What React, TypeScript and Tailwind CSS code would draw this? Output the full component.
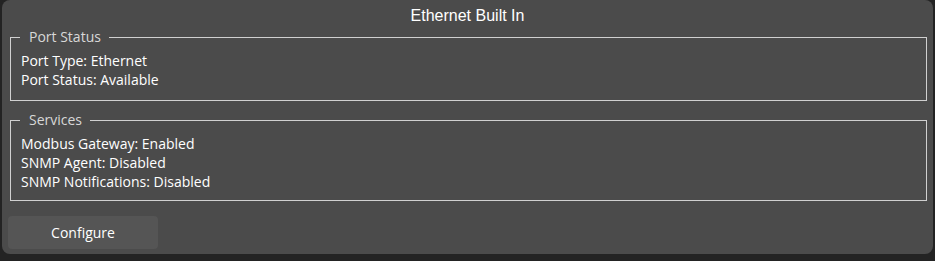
import React from "react";

const portLines = ["Port Type: Ethernet", "Port Status: Available"];
const serviceLines = [
  "Modbus Gateway: Enabled",
  "SNMP Agent: Disabled",
  "SNMP Notifications: Disabled",
];

function Group({ title, lines, bottom }: { title: string; lines: string[]; bottom: string }) {
  return (
    <fieldset className={`ml-2 mr-[6px] border border-[#d0d0d0] px-[10px] pt-[4px] ${bottom}`}>
      <legend className="-ml-[1px] pl-[9px] pr-[8px] text-[14px] leading-[20px] text-[#d8d8d8]">{title}</legend>
      {lines.map((line) => (
        <div key={line} className="text-[14px] leading-[19px] text-white">
          {line}
        </div>
      ))}
    </fieldset>
  );
}

export default function App() {
  return (
    <div className="h-[261px] w-[935px] bg-[#232323] pl-[2px] font-['Open_Sans',sans-serif]">
      <div className="flex h-[254px] w-[931px] flex-col rounded-lg bg-[#4b4b4b]">
        <div className="pt-[6px] text-center font-['Liberation_Sans',Arial,sans-serif] text-[16px] leading-[20px] text-white">
          Ethernet Built In
        </div>
        <div className="mt-[1px]">
          <Group title="Port Status" lines={portLines} bottom="pb-[11px]" />
        </div>
        <div className="mt-[9px]">
          <Group title="Services" lines={serviceLines} bottom="pb-[9px]" />
        </div>
        <div className="pl-[6px] pt-[15px]">
          <button className="h-[33px] w-[150px] rounded-sm bg-[#555555] text-[14px] text-white">
            Configure
          </button>
        </div>
      </div>
    </div>
  );
}
